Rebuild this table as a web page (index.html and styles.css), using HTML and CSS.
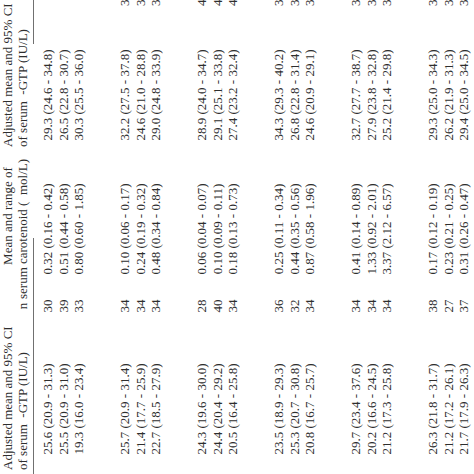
FILE: index.html
```html
<!DOCTYPE html>
<html>
<head>
<meta charset="utf-8">
<link rel="stylesheet" href="styles.css">
</head>
<body>
<div class="stage">
  <div class="sheet">
    <div class="row head">
      <span class="c-a hs">Adjusted mean and 95% CI</span>
      <span class="c-c hc shift">Mean and range of</span>
      <span class="c-d hs">Adjusted mean and 95% CI</span>
    </div>
    <div class="row head">
      <span class="c-a hs">of serum &nbsp;-GTP (IU/L)</span>
      <span class="c-n">n</span>
      <span class="c-c hc">serum carotenoid ( &nbsp;mol/L)</span>
      <span class="c-d hs">of serum &nbsp;-GTP (IU/L)</span>
    </div>
    <div class="rules"><span class="rule r1"></span><span class="rule r2"></span></div>

    <div class="group">
      <div class="row"><span class="c-a">25.6 (20.9 - 31.3)</span><span class="c-n">30</span><span class="c-c">0.32 (0.16 - 0.42)</span><span class="c-d">29.3 (24.6 - 34.8)</span></div>
      <div class="row"><span class="c-a">25.5 (20.9 - 31.0)</span><span class="c-n">39</span><span class="c-c">0.51 (0.44 - 0.58)</span><span class="c-d">26.5 (22.8 - 30.7)</span></div>
      <div class="row"><span class="c-a">19.3 (16.0 - 23.4)</span><span class="c-n">33</span><span class="c-c">0.80 (0.60 - 1.85)</span><span class="c-d">30.3 (25.5 - 36.0)</span></div>
    </div>
    <div class="group">
      <div class="row"><span class="c-a">25.7 (20.9 - 31.4)</span><span class="c-n">34</span><span class="c-c">0.10 (0.06 - 0.17)</span><span class="c-d">32.2 (27.5 - 37.8)</span><span class="c-e">34</span></div>
      <div class="row"><span class="c-a">21.4 (17.7 - 25.9)</span><span class="c-n">34</span><span class="c-c">0.24 (0.19 - 0.32)</span><span class="c-d">24.6 (21.0 - 28.8)</span><span class="c-e">34</span></div>
      <div class="row"><span class="c-a">22.7 (18.5 - 27.9)</span><span class="c-n">34</span><span class="c-c">0.48 (0.34 - 0.84)</span><span class="c-d">29.0 (24.8 - 33.9)</span><span class="c-e">34</span></div>
    </div>
    <div class="group">
      <div class="row"><span class="c-a">24.3 (19.6 - 30.0)</span><span class="c-n">28</span><span class="c-c">0.06 (0.04 - 0.07)</span><span class="c-d">28.9 (24.0 - 34.7)</span><span class="c-e">41</span></div>
      <div class="row"><span class="c-a">24.4 (20.4 - 29.2)</span><span class="c-n">40</span><span class="c-c">0.10 (0.09 - 0.11)</span><span class="c-d">29.1 (25.1 - 33.8)</span><span class="c-e">41</span></div>
      <div class="row"><span class="c-a">20.5 (16.4 - 25.8)</span><span class="c-n">34</span><span class="c-c">0.18 (0.13 - 0.73)</span><span class="c-d">27.4 (23.2 - 32.4)</span><span class="c-e">41</span></div>
    </div>
    <div class="group">
      <div class="row"><span class="c-a">23.5 (18.9 - 29.3)</span><span class="c-n">36</span><span class="c-c">0.25 (0.11 - 0.34)</span><span class="c-d">34.3 (29.3 - 40.2)</span><span class="c-e">34</span></div>
      <div class="row"><span class="c-a">25.3 (20.7 - 30.8)</span><span class="c-n">32</span><span class="c-c">0.44 (0.35 - 0.56)</span><span class="c-d">26.8 (22.8 - 31.4)</span><span class="c-e">34</span></div>
      <div class="row"><span class="c-a">20.8 (16.7 - 25.7)</span><span class="c-n">34</span><span class="c-c">0.87 (0.58 - 1.96)</span><span class="c-d">24.6 (20.9 - 29.1)</span><span class="c-e">34</span></div>
    </div>
    <div class="group">
      <div class="row"><span class="c-a">29.7 (23.4 - 37.6)</span><span class="c-n">34</span><span class="c-c">0.41 (0.14 - 0.89)</span><span class="c-d">32.7 (27.7 - 38.7)</span><span class="c-e">34</span></div>
      <div class="row"><span class="c-a">20.2 (16.6 - 24.5)</span><span class="c-n">34</span><span class="c-c">1.33 (0.92 - 2.01)</span><span class="c-d">27.9 (23.8 - 32.8)</span><span class="c-e">34</span></div>
      <div class="row"><span class="c-a">21.2 (17.3 - 25.8)</span><span class="c-n">34</span><span class="c-c">3.37 (2.12 - 6.57)</span><span class="c-d">25.2 (21.4 - 29.8)</span><span class="c-e">34</span></div>
    </div>
    <div class="group">
      <div class="row"><span class="c-a">26.3 (21.8 - 31.7)</span><span class="c-n">38</span><span class="c-c">0.17 (0.12 - 0.19)</span><span class="c-d">29.3 (25.0 - 34.3)</span><span class="c-e">34</span></div>
      <div class="row"><span class="c-a">21.2 (17.2 - 26.1)</span><span class="c-n">27</span><span class="c-c">0.23 (0.21 - 0.25)</span><span class="c-d">26.2 (21.9 - 31.3)</span><span class="c-e">34</span></div>
      <div class="row"><span class="c-a">21.7 (17.9 - 26.3)</span><span class="c-n">37</span><span class="c-c">0.31 (0.26 - 0.47)</span><span class="c-d">29.4 (25.0 - 34.5)</span><span class="c-e">34</span></div>
    </div>
  </div>
</div>
</body>
</html>
```
FILE: styles.css
```css
html, body {
  margin: 0;
  padding: 0;
  background: #ffffff;
}

.stage {
  width: 474px;
  height: 474px;
  overflow: hidden;
  background: #ffffff;
}

/* The table is laid out upright, then turned a quarter turn
   counter-clockwise, as it appears on the scanned page. */
.sheet {
  width: 560px;
  height: 474px;
  transform-origin: 0 0;
  transform: translate(0, 474px) rotate(-90deg);
  font-family: "Liberation Serif", "Times New Roman", serif;
  font-size: 13px;
  color: #2e2e2e;
}

.row {
  display: grid;
  grid-template-columns: 122px 27px 30px 17px 90px 37px 104px 36px 93px;
  padding-left: 4px;
  height: 15.4px;
  line-height: 15.4px;
  white-space: nowrap;
}

.row > span {
  justify-self: center;
  white-space: nowrap;
}

.c-a { grid-column: 1; }
.c-n { grid-column: 3; }
.c-c { grid-column: 5; }
.c-d { grid-column: 7; }
.c-e { grid-column: 9; }

.row > .c-e {
  justify-self: start;
  margin-left: 1px;
}

.head .hs {
  justify-self: start;
}

.head .hc {
  justify-self: center;
}

.head .shift {
  margin-left: 26px;
}

.rules {
  display: flex;
  height: 1px;
  margin-top: 2px;
  margin-bottom: 6.5px;
}

.rule {
  display: block;
  height: 1px;
  background: #707070;
}

.r1 {
  width: 236px;
}

.r2 {
  margin-left: 194px;
  flex: 1;
}

.group {
  margin-bottom: 30.8px;
}
```
